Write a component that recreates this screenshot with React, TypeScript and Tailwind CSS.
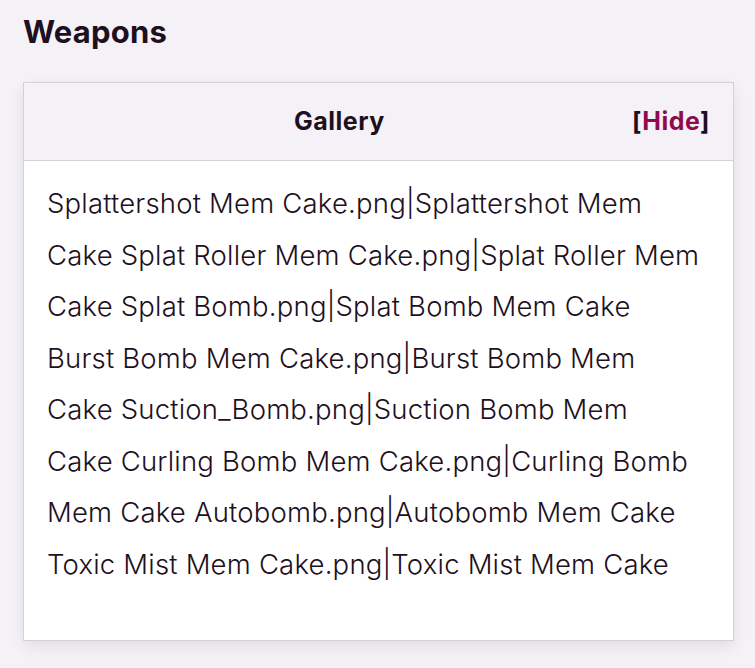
import React from 'react';

const lines = [
    'Splattershot Mem Cake.png|Splattershot Mem',
    'Cake Splat Roller Mem Cake.png|Splat Roller Mem',
    'Cake Splat Bomb.png|Splat Bomb Mem Cake',
    'Burst Bomb Mem Cake.png|Burst Bomb Mem',
    'Cake Suction_Bomb.png|Suction Bomb Mem',
    'Cake Curling Bomb Mem Cake.png|Curling Bomb',
    'Mem Cake Autobomb.png|Autobomb Mem Cake',
    'Toxic Mist Mem Cake.png|Toxic Mist Mem Cake',
];

const App: React.FC = () => {
    return (
        <div className="min-h-[668px] bg-[#f4f2f6] text-[#1e1020] pl-[23px] pr-[21px] pt-[12px] pb-[28px]" style={{ fontFamily: 'Inter, "Open Sans", sans-serif' }}>
            <h2 className="text-[31px] font-bold leading-[40px] mb-[30px] tracking-[0.2px]">Weapons</h2>

            {/* Gallery box */}
            <div className="border border-[#d4d0d6] bg-white shadow-[0_6px_14px_rgba(0,0,0,0.08)]">
                <div className="h-[78px] bg-[#f4f2f6] border-b border-[#d4d0d6] flex items-center px-[23px]">
                    <div className="flex-1 text-center text-[25px] font-bold tracking-[0.5px]">Gallery</div>
                    <div className="text-[25px] font-bold tracking-[0.5px]">
                        [<span className="text-[#8f0a4f]">Hide</span>]
                    </div>
                </div>
                <div className="px-[23px] pt-[17px] pb-[50px] text-[27.5px] font-light leading-[51.5px] tracking-[0.2px]">
                    {lines.map((l, i) => (
                        <div key={i} className="whitespace-nowrap">{l}</div>
                    ))}
                </div>
            </div>
        </div>
    );
};

export default App;
